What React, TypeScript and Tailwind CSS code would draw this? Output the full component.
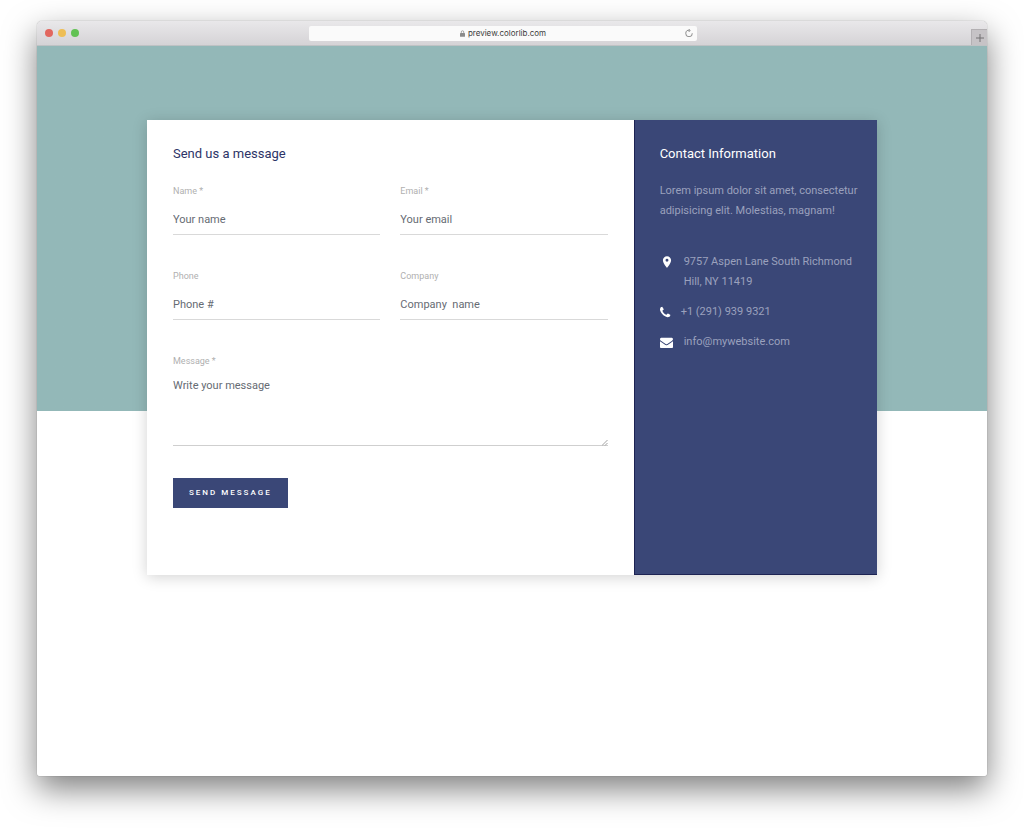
import React from 'react'
import { MdPlace } from 'react-icons/md'

const PhoneIcon = () => (
  <svg className="h-[13px] w-[11px] shrink-0" viewBox="192 64 1500 1664" fill="currentColor">
    <path d="M1600 1240q0 27-10 70.5t-21 68.5q-21 50-122 106-94 51-186 51-27 0-53-3.5t-57.5-12.5-47-14.5-55.5-20.5-49-18q-98-35-175-83-127-79-264-216t-216-264q-48-77-83-175-3-9-18-49t-20.5-55.5-14.5-47-12.5-57.5-3.5-53q0-92 51-186 56-101 106-122 25-11 68.5-21t70.5-10q14 0 21 3 18 6 53 76 11 19 30 54t35 63.5 31 53.5q3 4 17.5 25t21.5 35.5 7 28.5q0 20-28.5 50t-62 55-62 53-28.5 46q0 9 5 22.5t8.5 20.5 14 24 11.5 19q76 137 174 235t235 174q2 1 19 11.5t24 14 20.5 8.5 22.5 5q18 0 46-28.5t53-62 55-62 50-28.5q14 0 28.5 7t35.5 21.5 25 17.5q25 15 53.5 31t63.5 35 54 30q70 35 76 53 3 7 3 21z" />
  </svg>
)

const EnvelopeIcon = () => (
  <svg className="size-[13px] shrink-0" viewBox="0 0 1792 1792" fill="currentColor">
    <path d="M1792 710v794q0 66-47 113t-113 47h-1472q-66 0-113-47t-47-113v-794q44 49 101 87 362 246 497 345 57 42 92.5 65.5t94.5 48 110 24.5h2q51 0 110-24.5t94.5-48 92.5-65.5q170-123 498-345 57-39 100-87zm0-294q0 79-49 151t-122 123q-376 261-468 325-10 7-42.5 31t-54 38.5-52 32.5-57.5 27-50 9h-2q-23 0-50-9t-57.5-27-52-32.5-54-38.5-42.5-31q-91-64-262-182.5t-205-142.5q-62-42-117-115.5t-55-136.5q0-78 41.5-130t118.5-52h1472q65 0 112.5 47t47.5 113z" />
  </svg>
)

const TitleBar = () => (
  <header className="grid h-[25px] grid-cols-[272fr_388fr_290fr] items-center border-b border-[#bfc2c4] bg-linear-to-b from-[#e9e8ea] to-[#d5d3d6]">
    <div className="flex gap-[5px] pl-2">
      <span className="size-2 rounded-full bg-[#e2675f]" />
      <span className="size-2 rounded-full bg-[#eebe55]" />
      <span className="size-2 rounded-full bg-[#62c254]" />
    </div>
    <div className="flex h-[15px] items-center rounded-xs bg-[#fafafa] px-1">
      <div className="flex flex-1 items-center justify-center gap-[3px] pl-2">
        <svg className="h-[7px] w-[5px]" viewBox="0 0 10 14">
          <path d="M2.5 6V4a2.5 2.5 0 0 1 5 0v2" fill="none" stroke="#8b8b8b" strokeWidth="1.5" />
          <rect y="6" width="10" height="7.5" rx="1" fill="#8b8b8b" />
        </svg>
        <span className="font-['Inter','Liberation_Sans',sans-serif] text-[8px] leading-none text-[#3c3c3c]">
          preview.colorlib.com
        </span>
      </div>
      <button type="button" aria-label="Reload">
        <svg className="size-2" viewBox="0 0 16 16" fill="none" stroke="#7a7a7a" strokeWidth="1.7">
          <path d="M14.5 8.5A6.5 6.5 0 1 1 9 2.6" />
          <path d="M7 0l3.4 2.8L7.4 6" />
        </svg>
      </button>
    </div>
    <button
      type="button"
      aria-label="New tab"
      className="flex size-4 items-center justify-center self-end justify-self-end border-t border-l border-[#b3b0b3] bg-[#c6c3c6]"
    >
      <svg className="size-2" viewBox="0 0 8 8" stroke="#727072" strokeWidth="1">
        <path d="M4 0v8M0 4h8" />
      </svg>
    </button>
  </header>
)

const fields = [
  { id: 'name', label: 'Name *', placeholder: 'Your name', type: 'text' },
  { id: 'email', label: 'Email *', placeholder: 'Your email', type: 'email' },
  { id: 'phone', label: 'Phone', placeholder: 'Phone #', type: 'tel' },
  { id: 'company', label: 'Company', placeholder: 'Company  name', type: 'text' },
]

const ContactForm = () => (
  <form className="bg-white px-[26px] pt-6 pb-[67px]" onSubmit={(e) => e.preventDefault()}>
    <h3 className="text-[13px] leading-5 text-[#2d3467]">Send us a message</h3>
    <div className="mt-5 grid grid-cols-2 gap-x-5 gap-y-[34px]">
      {fields.map((field) => (
        <div key={field.id} className="flex flex-col gap-1.5">
          <label htmlFor={field.id} className="text-[9px] leading-[14px] text-[#b0b0b0]">
            {field.label}
          </label>
          <input
            id={field.id}
            type={field.type}
            placeholder={field.placeholder}
            className="h-[31px] w-full border-b border-[#d9d9d9] text-[11px] text-[#555b63] outline-none placeholder:text-[#666b73]"
          />
        </div>
      ))}
      <div className="col-span-2 flex flex-col gap-1.5">
        <label htmlFor="message" className="text-[9px] leading-[14px] text-[#b0b0b0]">
          Message *
        </label>
        <div className="relative">
          <textarea
            id="message"
            placeholder="Write your message"
            className="block h-[72px] w-full resize-y border-b border-[#cfcfcf] pt-1 text-[11px] leading-4 text-[#555b63] outline-none placeholder:text-[#666b73] [&::-webkit-resizer]:hidden"
          />
          <svg
            className="pointer-events-none absolute right-0 bottom-0 size-1.5"
            viewBox="0 0 6 6"
            stroke="#8a8a8a"
            strokeWidth="0.8"
          >
            <path d="M0 5.5L5.5 0M3 5.5L5.5 3" />
          </svg>
        </div>
      </div>
    </div>
    <button
      type="submit"
      className="mt-8 block h-[30px] bg-[#3a4777] px-4 text-[8px] font-medium tracking-[2px] text-white uppercase"
    >
      Send Message
    </button>
  </form>
)

const ContactInfo = () => (
  <section className="border-b border-l border-[#1d2353] bg-[#3a4777] pt-6 pr-3 pl-[25px] text-[11px] leading-5 text-[#9aa1bd]">
    <h3 className="text-[13px] text-white">Contact Information</h3>
    <p className="mt-[17px]">Lorem ipsum dolor sit amet, consectetur adipisicing elit. Molestias, magnam!</p>
    <ul className="mt-[31px] flex flex-col gap-2.5">
      <li className="flex gap-2.5">
        <span className="flex h-5 w-[14px] shrink-0 items-center justify-center text-white">
          <MdPlace className="size-[14px]" />
        </span>
        <span>9757 Aspen Lane South Richmond Hill, NY 11419</span>
      </li>
      <li className="flex gap-2.5">
        <span className="flex h-5 items-center text-white">
          <PhoneIcon />
        </span>
        <span>+1 (291) 939 9321</span>
      </li>
      <li className="flex gap-2.5">
        <span className="flex h-5 w-[14px] items-center text-white">
          <EnvelopeIcon />
        </span>
        <span>info@mywebsite.com</span>
      </li>
    </ul>
  </section>
)

export default function App() {
  return (
    <div className="flex min-h-screen flex-col bg-white px-[37px] pt-[21px] pb-[53px] font-['Roboto','Liberation_Sans',sans-serif]">
      <div className="flex flex-1 flex-col overflow-hidden rounded-t-[5px] rounded-b-[3px] shadow-[0_0_1px_rgba(0,0,0,0.5),0_13px_32px_rgba(0,0,0,0.5)]">
        <TitleBar />
        <main className="flex-1 bg-linear-to-b from-[#93b8b8] from-50% to-white to-50% px-6 py-[74px]">
          <div className="mx-auto grid max-w-[730px] grid-cols-[2fr_1fr] shadow-[0_2px_14px_rgba(0,0,0,0.18)]">
            <ContactForm />
            <ContactInfo />
          </div>
        </main>
      </div>
    </div>
  )
}
